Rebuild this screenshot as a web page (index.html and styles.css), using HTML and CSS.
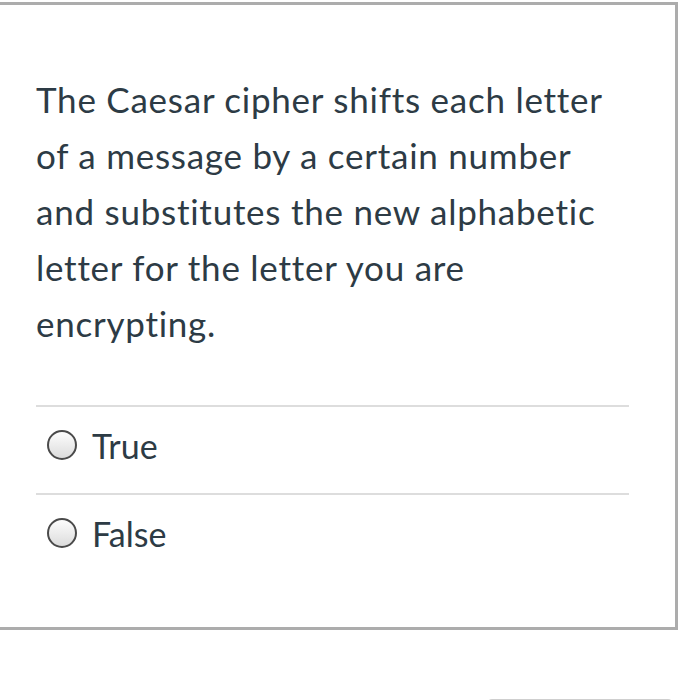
FILE: index.html
```html
<!DOCTYPE html>
<html lang="en">
<head>
  <meta name="viewport" content="width=device-width, initial-scale=1">
  <title>Quiz Question</title>
  <link rel="stylesheet" href="styles.css">
</head>
<body>
  <div class="question">
    <div class="question-text">
      The Caesar cipher shifts each letter of a message by a certain number and substitutes the new alphabetic letter for the letter you are encrypting.
    </div>

    <div class="answers">
      <label class="answer">
        <input type="radio" name="q1" value="true">
        <span class="radio"></span>
        <span>True</span>
      </label>
      <label class="answer">
        <input type="radio" name="q1" value="false">
        <span class="radio"></span>
        <span>False</span>
      </label>
    </div>
  </div>

  <div class="next-button"></div>
</body>
</html>
```

FILE: styles.css
```css
body {
  margin: 0;
  background: #fff;
  font-family: Lato, "Open Sans", sans-serif;
  font-variant-ligatures: none;
  color: #2d3b45;
}
.question {
  margin-top: 2px;
  width: 678px;
  border: 3px solid #acacac;
  border-left: none;
  padding: 66px 0 0 36px;
  box-sizing: border-box;
  height: 628px;
}
.question-text {
  font-size: 35px;
  letter-spacing: 0.75px;
  line-height: 56px;
  width: 592px;
}
.answers {
  margin-top: 54px;
  width: 593px;
}
.answer {
  display: flex;
  align-items: center;
  gap: 15px;
  border-top: 2px solid #dddddd;
  height: 76px;
  padding: 0 0 10px 11px;
  font-size: 34px;
}
.answer input {
  display: none;
}
.radio {
  width: 26px;
  height: 26px;
  border-radius: 50%;
  border: 2px solid #4a4a4a;
  background: linear-gradient(#fdfdfd, #dcdcdc);
}
.next-button {
  margin: 69px 0 0 488px;
  width: 184px;
  height: 4px;
  border-top: 1px solid #cfcfcf;
  border-radius: 4px 4px 0 0;
}
```
